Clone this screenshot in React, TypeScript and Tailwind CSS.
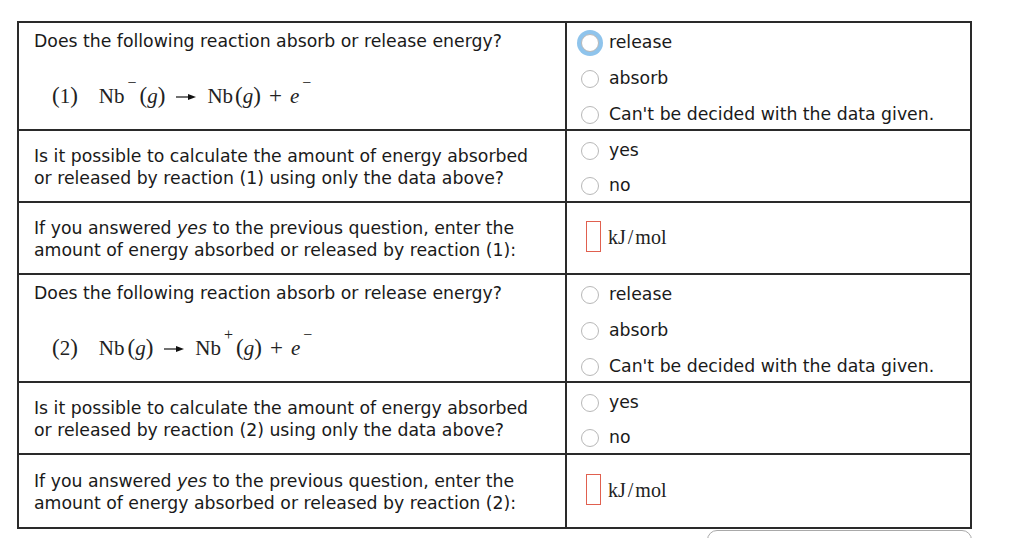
import React from "react";

const sans = "font-['DejaVu_Sans','Verdana',sans-serif]";
const serif = "font-['Liberation_Serif','Times_New_Roman',serif]";

function Circle({ focused }: { focused?: boolean }) {
  return (
    <span
      className={
        "w-[18px] h-[18px] rounded-full border border-[#b8b8b8] bg-white shrink-0 " +
        (focused ? "ring-4 ring-[#8fc4ec]" : "")
      }
    />
  );
}

function Radio({ label, focused, h }: { label: string; focused?: boolean; h: string }) {
  return (
    <div className={`flex items-center ${h}`}>
      <Circle focused={focused} />
      <span className="ml-[10px]">{label}</span>
    </div>
  );
}

function Arrow() {
  return (
    <svg width="20" height="8" viewBox="0 0 20 8" className="mx-[11px] self-center">
      <line x1="0" y1="4" x2="14" y2="4" stroke="#111" strokeWidth="1.2" />
      <path d="M12 1 L20 4 L12 7 Z" fill="#111" />
    </svg>
  );
}

function Sup({ children }: { children: React.ReactNode }) {
  return <span className="relative -top-[15px] text-[16px] mx-[3px]">{children}</span>;
}

function P({ children }: { children: React.ReactNode }) {
  return <span className="text-[23px] leading-none">{children}</span>;
}

function G() {
  return (
    <span className="inline-flex items-baseline">
      <P>(</P>
      <i className="text-[21px]">g</i>
      <P>)</P>
    </span>
  );
}

function Plus() {
  return <span className="mx-[8px] text-[23px] leading-none">+</span>;
}

function Eq1() {
  return (
    <div className={`${serif} text-[21px] text-[#222] flex items-baseline pl-[18px]`}>
      <P>(</P><span>1</span><P>)</P>
      <span className="ml-[21px]">Nb</span>
      <Sup>−</Sup>
      <G />
      <Arrow />
      <span>Nb</span>
      <span className="ml-[2px]"><G /></span>
      <Plus />
      <i>e</i>
      <Sup>−</Sup>
    </div>
  );
}

function Eq2() {
  return (
    <div className={`${serif} text-[21px] text-[#222] flex items-baseline pl-[18px]`}>
      <P>(</P><span>2</span><P>)</P>
      <span className="ml-[21px]">Nb</span>
      <span className="ml-[3px]"><G /></span>
      <Arrow />
      <span>Nb</span>
      <Sup>+</Sup>
      <G />
      <Plus />
      <i>e</i>
      <Sup>−</Sup>
    </div>
  );
}

function Units() {
  return (
    <div className="flex items-center">
      <span className="w-[15px] h-[31px] border-[1.5px] border-[#e0604f] bg-white" />
      <span className={`${serif} text-[20px] text-[#222] ml-[7px]`}>
        kJ<span className="mx-[2px]">/</span>mol
      </span>
    </div>
  );
}

function Block({ n }: { n: 1 | 2 }) {
  const rowB = "flex border-b-2 border-[#2a2a2a]";
  const left = "w-[548px] shrink-0 border-r-2 border-[#2a2a2a] px-[15px]";
  const right = "flex-1 pl-[14px]";
  return (
    <>
      <div className={`${rowB} h-[108px]`}>
        <div className={`${left} pt-[7px]`}>
          <div className="leading-[22px]">Does the following reaction absorb or release energy?</div>
          <div className="mt-[29px]">{n === 1 ? <Eq1 /> : <Eq2 />}</div>
        </div>
        <div className={`${right} pt-[2px]`}>
          <Radio h="h-9" label="release" focused={n === 1} />
          <Radio h="h-9" label="absorb" />
          <Radio h="h-9" label="Can't be decided with the data given." />
        </div>
      </div>
      <div className={`${rowB} h-[72px]`}>
        <div className={`${left} pt-[2px] flex flex-col justify-center leading-[22px]`}>
          <div>Is it possible to calculate the amount of energy absorbed</div>
          <div>or released by reaction ({n}) using only the data above?</div>
        </div>
        <div className={`${right} pt-[2px]`}>
          <Radio h="h-[35px]" label="yes" />
          <Radio h="h-[35px]" label="no" />
        </div>
      </div>
      <div className={`flex h-[72px] ${n === 1 ? "border-b-2 border-[#2a2a2a]" : ""}`}>
        <div className={`${left} pt-[2px] flex flex-col justify-center leading-[22px]`}>
          <div>
            If you answered <i>yes</i> to the previous question, enter the
          </div>
          <div>amount of energy absorbed or released by reaction ({n}):</div>
        </div>
        <div className={`${right} flex items-center pl-[19px] pb-[3px]`}>
          <Units />
        </div>
      </div>
    </>
  );
}

export default function App() {
  return (
    <div className={`w-[1024px] h-[538px] bg-white overflow-hidden ${sans} text-[17.3px] text-[#1a1a1a]`}>
      <div className="ml-[17px] mt-[21px] w-[955px] border-2 border-[#2a2a2a]">
        <Block n={1} />
        <Block n={2} />
      </div>
      <div className="ml-[707px] mt-[1px] w-[265px] h-[20px] rounded-t-[10px] border-[1.5px] border-[#a9a9a9]" />
    </div>
  );
}
